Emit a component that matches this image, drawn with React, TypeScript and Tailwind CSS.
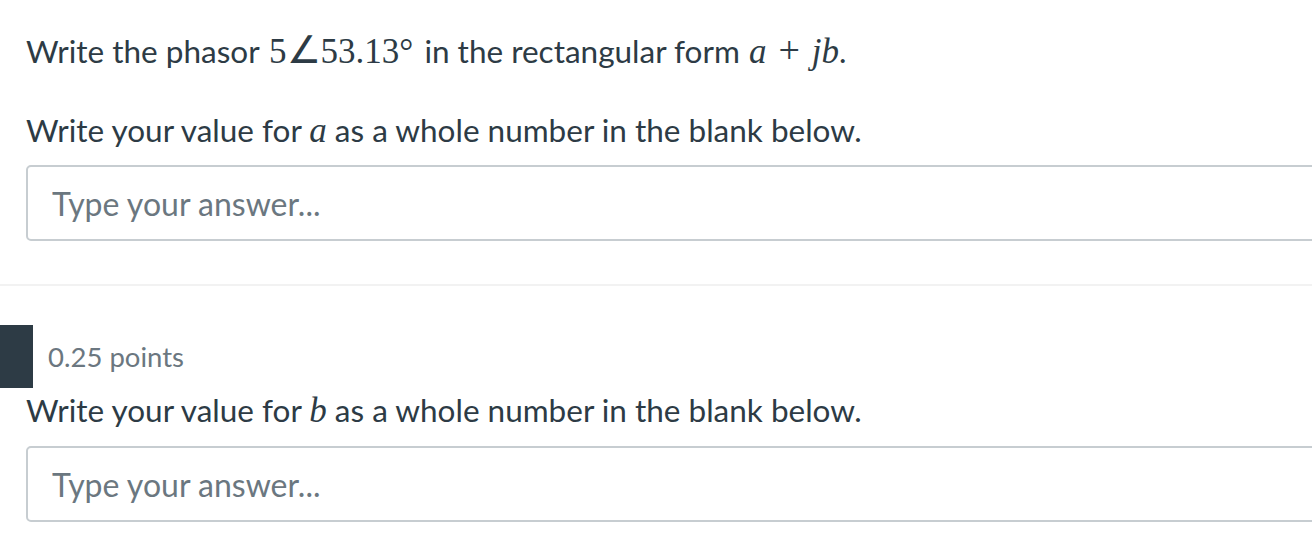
import { useState } from 'react'

const math = "font-['Liberation_Serif',serif]"

function AnswerInput() {
  const [value, setValue] = useState('')
  return (
    <input
      type="text"
      value={value}
      onChange={(e) => setValue(e.target.value)}
      placeholder="Type your answer..."
      className="box-border h-[76px] w-[1320px] rounded-[5px] border-2 border-[#c7cdd1] bg-white px-[24px] text-[32px] text-[#2d3b45] outline-none placeholder:text-[#6b7780]"
    />
  )
}

export default function App() {
  return (
    <div className="h-[534px] w-[1312px] overflow-hidden bg-white font-['Lato',sans-serif] text-[#2d3b45]">
      {/* First question */}
      <div className="pl-[26px] pt-[28px]">
        <p className="h-[44px] whitespace-nowrap text-[31.5px] leading-[44px]">
          Write the phasor{' '}
          <span className={`${math} ml-[2px] mr-[3px] text-[35px]`}>
            5<span className="text-[38px] font-light">∠</span>53.13°
          </span>{' '}
          in the rectangular form{' '}
          <span className={`${math} ml-[1px] text-[35px]`}>
            <i>a</i>
            <span className="mx-[12px] text-[38px]">+</span>
            <i>jb</i>
          </span>
          .
        </p>
        <p className="mt-[36px] h-[44px] whitespace-nowrap text-[31.5px] leading-[44px]">
          Write your value for <i className={`${math} text-[35px]`}>a</i> as a whole number in the
          blank below.
        </p>
        <div className="mt-[13px]">
          <AnswerInput />
        </div>
      </div>

      {/* Divider */}
      <div className="mt-[43px] h-[2px] bg-[#f2f2f2]" />

      {/* Second question */}
      <div className="mt-[39px] flex items-center">
        <div className="h-[63px] w-[33px] bg-[#2d3b45]" />
        <span className="ml-[15px] text-[27.5px] text-[#6b7780]">0.25 points</span>
      </div>
      <div className="pl-[26px]">
        <p className="h-[44px] whitespace-nowrap text-[31.5px] leading-[44px]">
          Write your value for <i className={`${math} text-[35px]`}>b</i> as a whole number in the
          blank below.
        </p>
        <div className="mt-[14px]">
          <AnswerInput />
        </div>
      </div>
    </div>
  )
}
